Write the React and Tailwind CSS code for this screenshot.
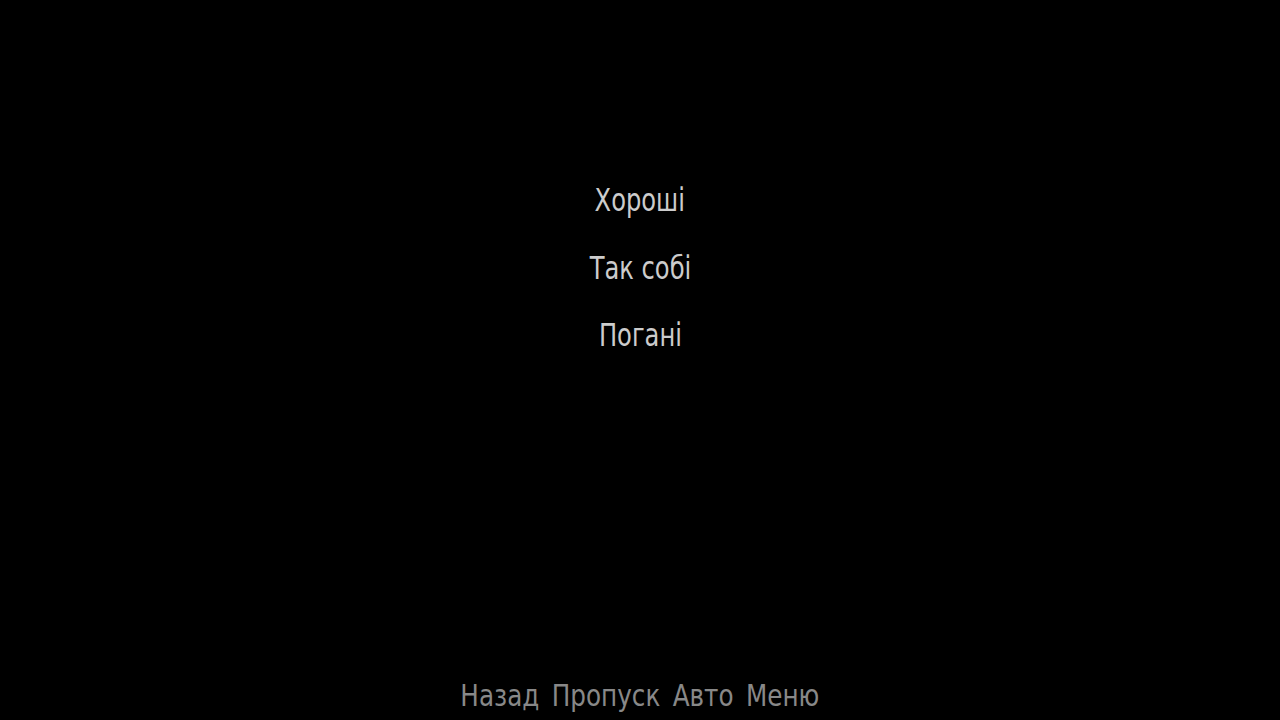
export default function App() {
  const font = { fontFamily: '"DejaVu Sans Condensed", "DejaVu Sans", sans-serif' };
  return (
    <div className="w-[1280px] h-[720px] bg-black flex flex-col items-center overflow-hidden" style={font}>
      <div className="pt-[167px] flex flex-col items-center text-[32px] leading-[67.5px] text-[#cccccc]">
        <div className="scale-x-[0.84]">Хороші</div>
        <div className="scale-x-[0.84]">Так собі</div>
        <div className="scale-x-[0.84]">Погані</div>
      </div>
      <div className="mt-auto pb-[9px] flex gap-[14px] text-[31px] leading-[32px] text-[#888888] scale-x-[0.885]">
        <span>Назад</span>
        <span>Пропуск</span>
        <span>Авто</span>
        <span>Меню</span>
      </div>
    </div>
  );
}
